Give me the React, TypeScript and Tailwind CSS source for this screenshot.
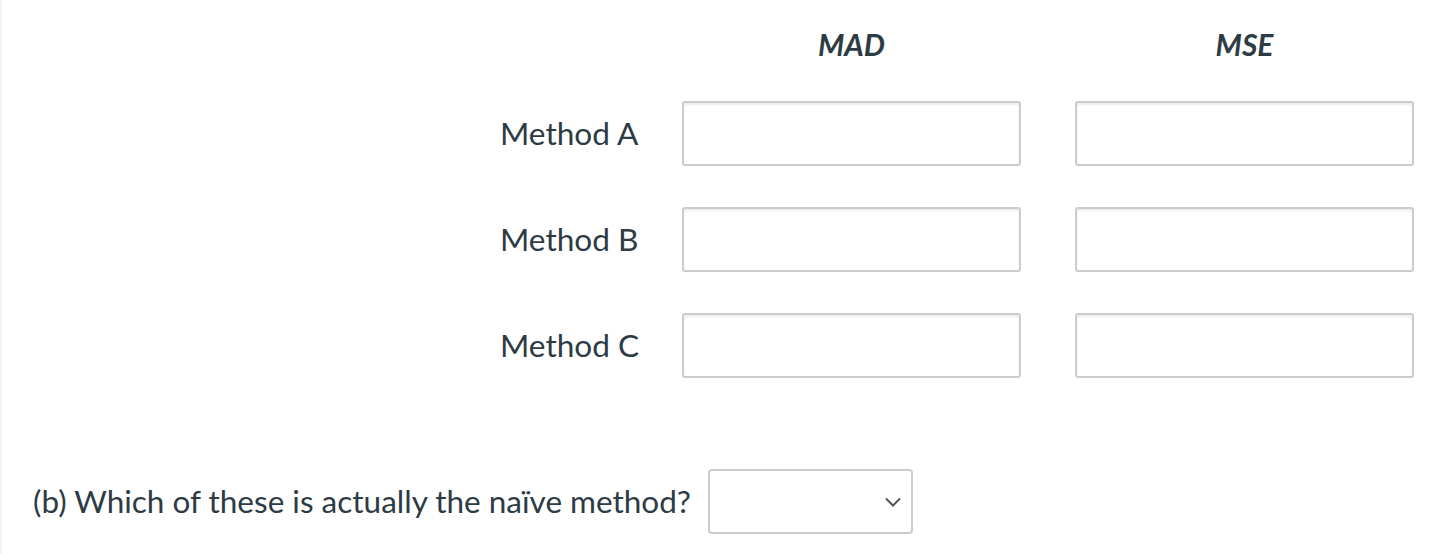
import React from 'react';

const rows = ['Method A', 'Method B', 'Method C'];

function Field() {
  return (
    <input
      type="text"
      className="w-[339px] h-[65px] rounded-[3px] border-2 border-[#c7cdd1] bg-white shadow-[inset_0_2px_2px_rgba(0,0,0,0.08)] outline-none"
    />
  );
}

export default function App() {
  return (
    <div
      className="w-[1432px] h-[554px] bg-white text-[#2d3b45] border-l-2 border-[#f4f4f4] overflow-hidden"
      style={{ fontFamily: 'Lato, "Noto Sans", sans-serif' }}
    >
      {/* Column headers */}
      <div className="flex h-[88px] items-center pl-[680px]">
        <div className="w-[339px] text-center text-[30px] font-bold italic">MAD</div>
        <div className="w-[54px]" />
        <div className="w-[339px] text-center text-[30px] font-bold italic">MSE</div>
      </div>

      {/* Method rows */}
      <div className="mt-[13px] flex flex-col gap-[41px] pl-[498px]">
        {rows.map((r) => (
          <div key={r} className="flex items-center">
            <div className="w-[182px] text-[31.6px]">{r}</div>
            <Field />
            <div className="w-[54px]" />
            <Field />
          </div>
        ))}
      </div>

      {/* Part (b) */}
      <div className="mt-[91px] flex items-center pl-[31px]">
        <span className="text-[31.5px]">(b) Which of these is actually the naïve method?</span>
        <div className="relative ml-[17px] w-[205px] h-[65px] rounded-[4px] border-2 border-[#c7cdd1] bg-white">
          <svg
            className="absolute right-[10px] top-1/2 -translate-y-1/2"
            width="16"
            height="10"
            viewBox="0 0 16 10"
            fill="none"
            stroke="#555"
            strokeWidth="2"
          >
            <path d="M1 1.5 L8 8.5 L15 1.5" />
          </svg>
        </div>
      </div>
    </div>
  );
}
